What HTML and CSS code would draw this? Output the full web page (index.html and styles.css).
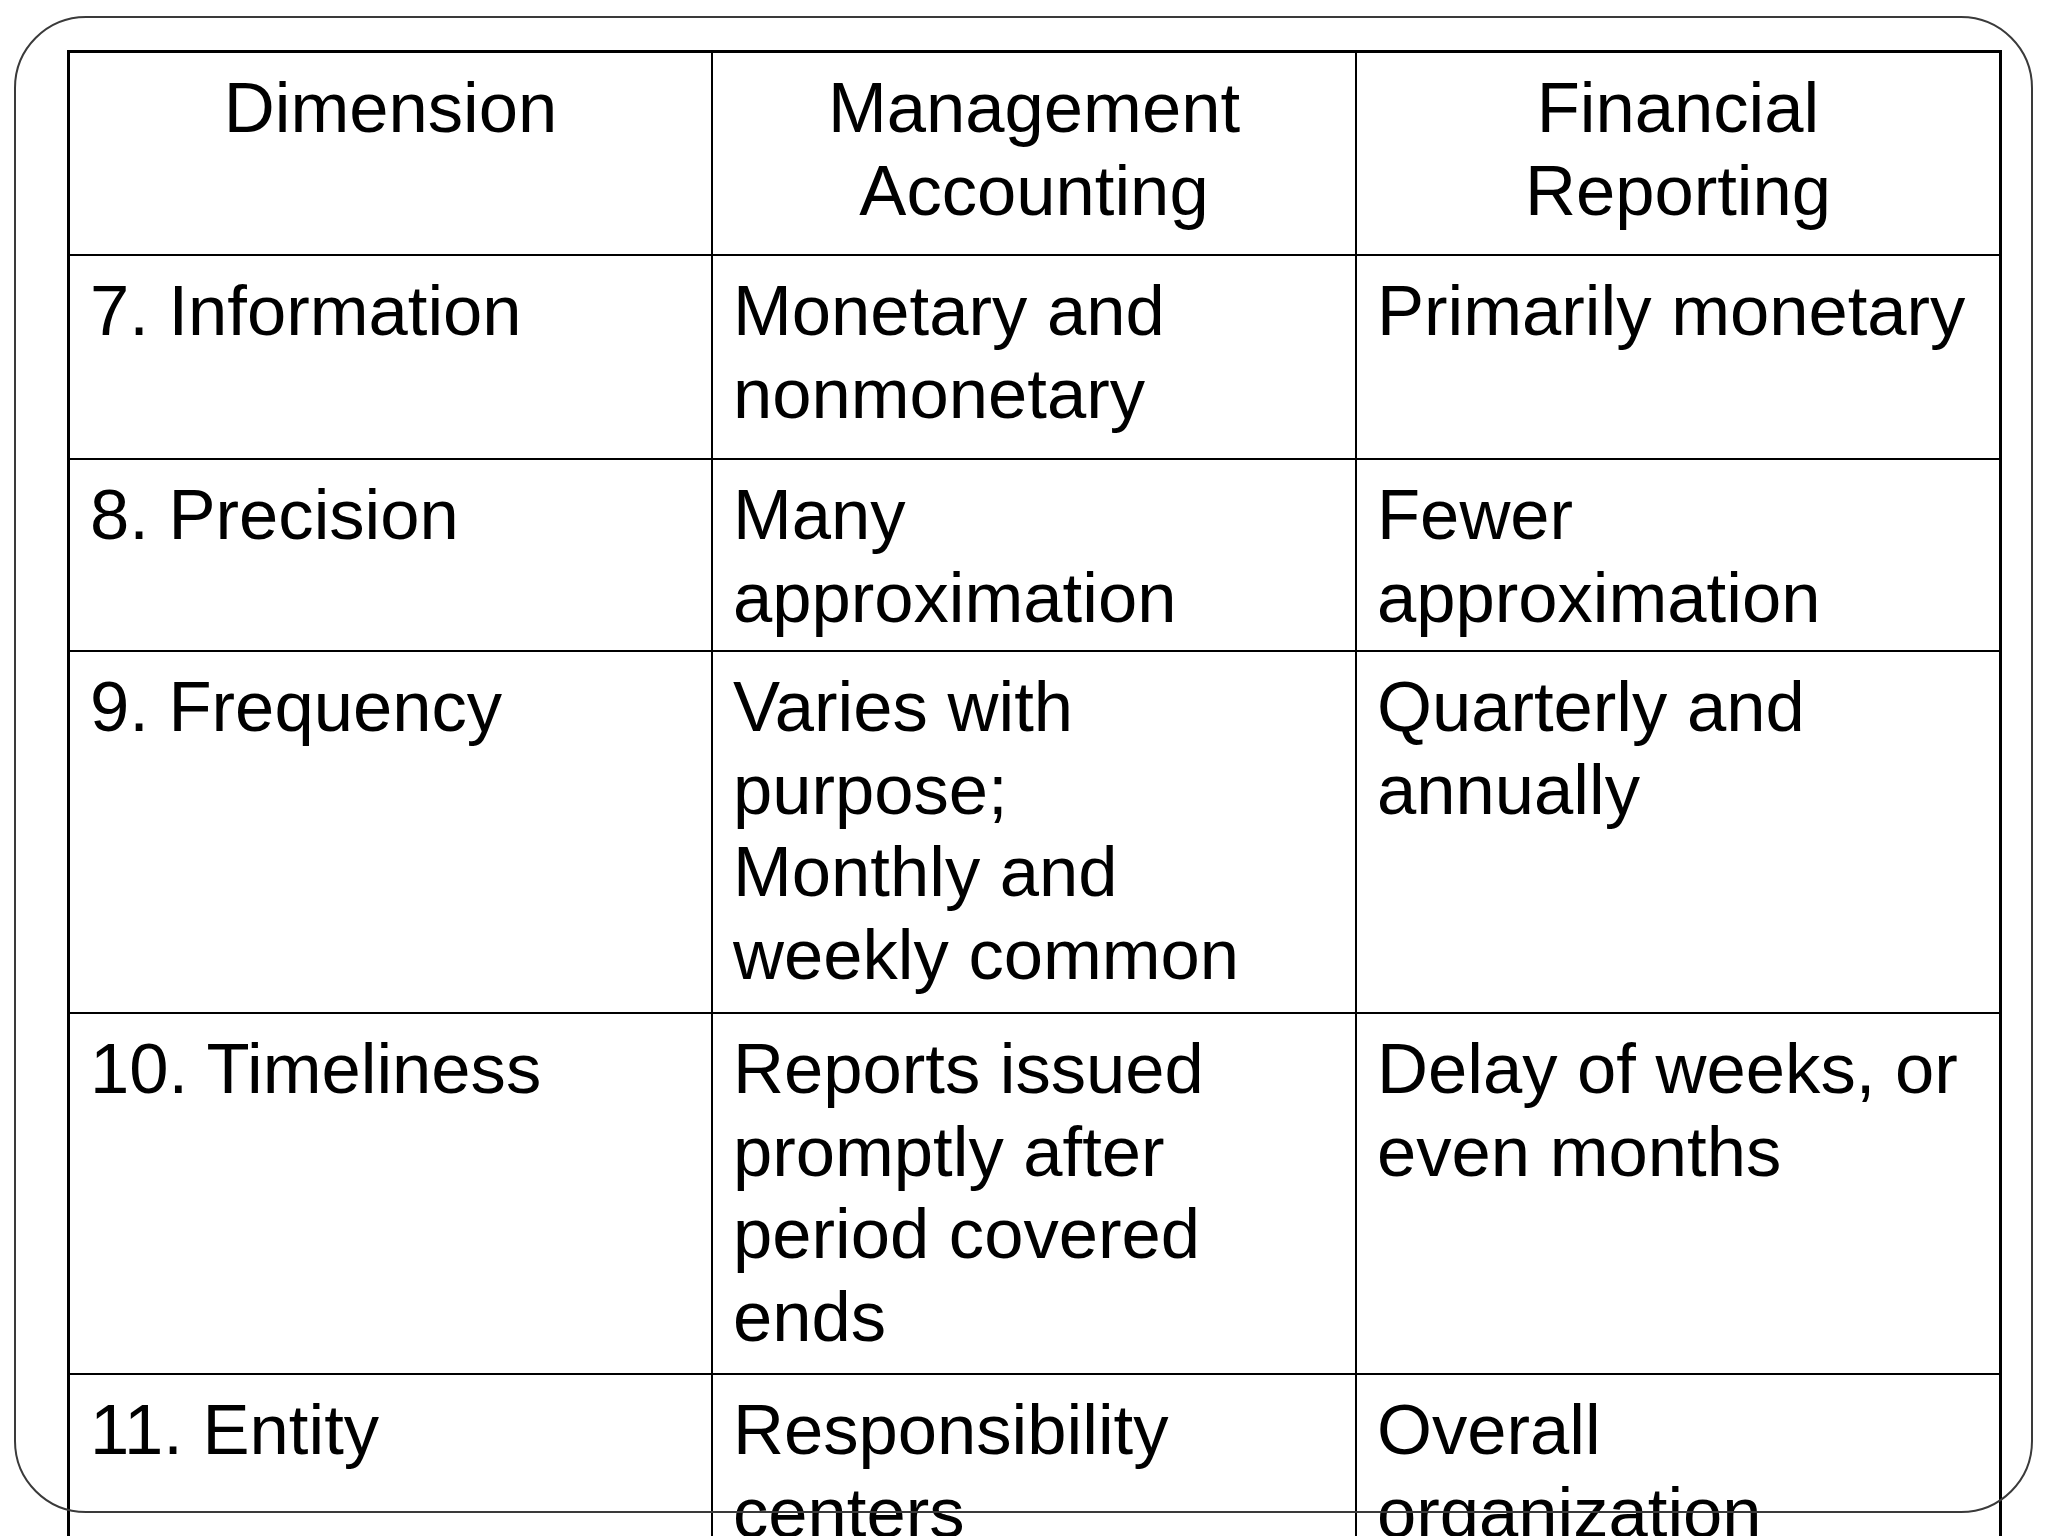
FILE: index.html
```html
<!DOCTYPE html>
<html lang="en">
<head>
<meta charset="utf-8">
<title>Management Accounting vs Financial Reporting</title>
<link rel="stylesheet" href="styles.css">
</head>
<body>
<div class="page">
  <div class="grid">
    <div class="cell head">Dimension</div>
    <div class="cell head">Management<br>Accounting</div>
    <div class="cell head">Financial<br>Reporting</div>

    <div class="cell">7. Information</div>
    <div class="cell">Monetary and<br>nonmonetary</div>
    <div class="cell">Primarily monetary</div>

    <div class="cell">8. Precision</div>
    <div class="cell">Many<br>approximation</div>
    <div class="cell">Fewer<br>approximation</div>

    <div class="cell">9. Frequency</div>
    <div class="cell">Varies with<br>purpose;<br>Monthly and<br>weekly common</div>
    <div class="cell">Quarterly and<br>annually</div>

    <div class="cell">10. Timeliness</div>
    <div class="cell">Reports issued<br>promptly after<br>period covered<br>ends</div>
    <div class="cell">Delay of weeks, or<br>even months</div>

    <div class="cell">11. Entity</div>
    <div class="cell">Responsibility<br>centers</div>
    <div class="cell">Overall<br>organization</div>
  </div>
  <div class="frame"></div>
</div>
</body>
</html>
```
FILE: styles.css
```css
html, body {
  margin: 0;
  padding: 0;
  width: 2048px;
  height: 1536px;
  overflow: hidden;
  background: #ffffff;
}

.page {
  position: relative;
  width: 2048px;
  height: 1536px;
  overflow: hidden;
  box-sizing: border-box;
  padding: 50px 0 0 67px;
  font-family: "Liberation Sans", Arial, sans-serif;
  color: #000000;
}

.grid {
  display: grid;
  width: 1929px;
  grid-template-columns: 643px 644px 642px;
  grid-template-rows: 203px 204px 192px 362px 361px 320px;
  border: 3px solid #000000;
  border-bottom: none;
}

.cell {
  box-sizing: border-box;
  border-right: 2px solid #000000;
  border-bottom: 2px solid #000000;
  padding: 14px 16px 0 20px;
  font-size: 70.6px;
  line-height: 82.5px;
  white-space: nowrap;
}

.cell:nth-child(3n) {
  border-right: none;
}

.head {
  text-align: center;
  padding-left: 18px;
  padding-right: 18px;
}

.frame {
  position: absolute;
  left: 14px;
  top: 16px;
  width: 2019px;
  height: 1497px;
  box-sizing: border-box;
  border: 2px solid #3a3a3a;
  border-radius: 72px;
  pointer-events: none;
}
```
